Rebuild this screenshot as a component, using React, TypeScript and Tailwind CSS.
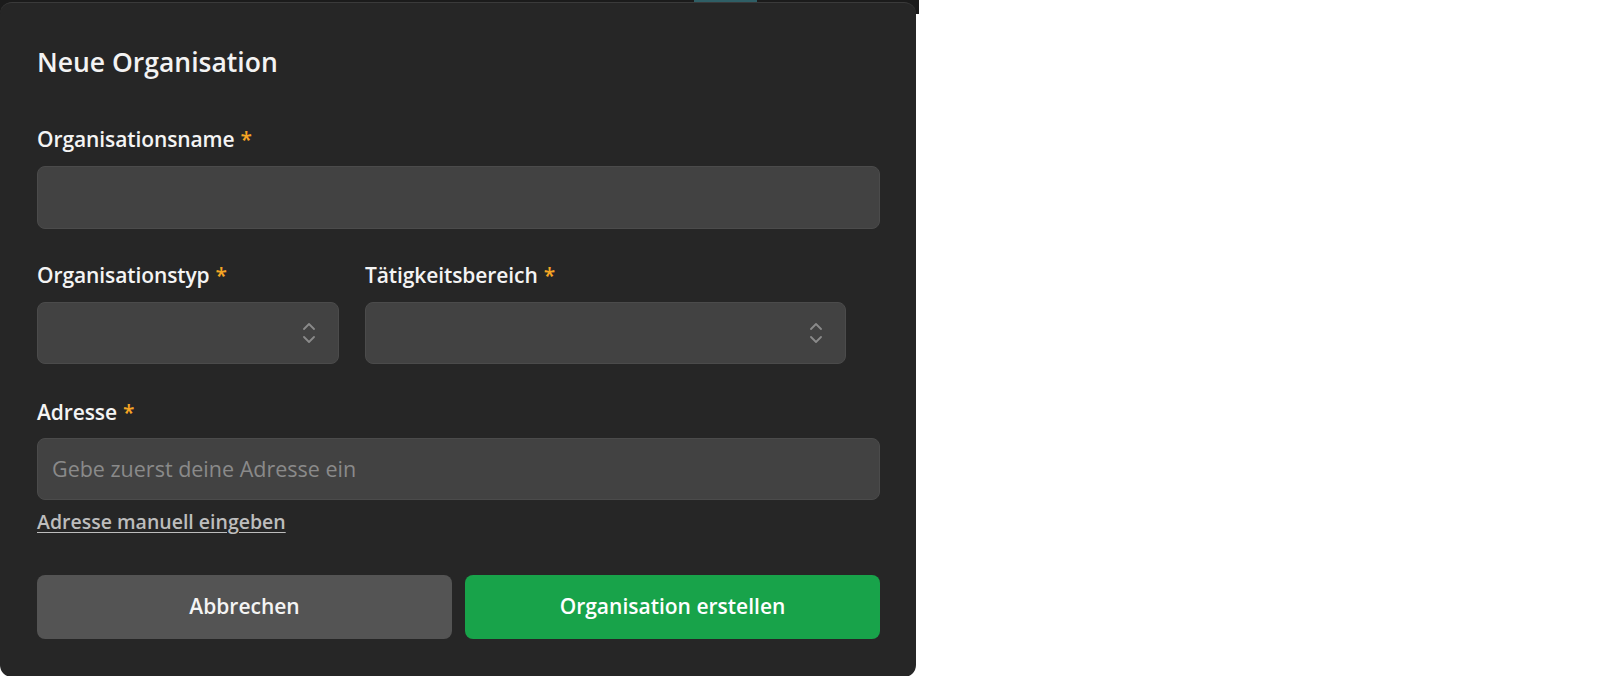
import React from 'react';

function Required() {
  return <span className="ml-1.5 text-[#f5a524]">*</span>;
}

function Label({ children }: { children: React.ReactNode }) {
  return (
    <label className="block text-[21px] leading-[26px] font-semibold text-[#f4f4f4] tracking-[-0.1px]">
      {children}
      <Required />
    </label>
  );
}

function UpDown() {
  return (
    <svg width="12" height="22" viewBox="0 0 12 22" fill="none" stroke="#8a8a8a" strokeWidth="1.8" strokeLinecap="round" strokeLinejoin="round">
      <path d="M1 7l5-5 5 5" />
      <path d="M1 15l5 5 5-5" />
    </svg>
  );
}

function Select({ className = '' }: { className?: string }) {
  return (
    <div className={`h-[62px] rounded-lg border border-[#4b4b4b] bg-[#424242] flex items-center justify-end pr-[23px] ${className}`}>
      <UpDown />
    </div>
  );
}

export default function App() {
  return (
    <div className="min-h-screen bg-white relative" style={{ fontFamily: '"Open Sans", "Noto Sans", sans-serif' }}>
      {/* backdrop strip behind the dialog */}
      <div className="absolute top-0 left-0 w-[919px] h-[14px] bg-[#1b1b1b]">
        <div className="absolute top-0 left-[694px] w-[63px] h-[2px] bg-[#2f5f66]" />
      </div>
      <div className="relative top-[2px] w-[916px] h-[675px] rounded-xl bg-[#262626] border-t border-[#3a3a3a] pl-[37px] pr-[36px] pt-[42px]">
        <h2 className="text-[26.5px] leading-[34px] font-semibold text-[#f3f3f3]">Neue Organisation</h2>

        <div className="mt-[47px]">
          <Label>Organisationsname</Label>
          <div className="mt-[14px] h-[63px] rounded-lg border border-[#4b4b4b] bg-[#424242]" />
        </div>

        <div className="mt-[33px] grid grid-cols-[302px_481px] gap-x-[26px]">
          <div>
            <Label>Organisationstyp</Label>
            <Select className="mt-[14px]" />
          </div>
          <div>
            <Label>Tätigkeitsbereich</Label>
            <Select className="mt-[14px]" />
          </div>
        </div>

        <div className="mt-[35px]">
          <Label>Adresse</Label>
          <div className="mt-[13px] h-[62px] rounded-lg border border-[#4b4b4b] bg-[#424242] flex items-center px-[14px]">
            <span className="text-[21.5px] text-[#8a8a8a]">Gebe zuerst deine Adresse ein</span>
          </div>
          <a className="mt-[10px] inline-block text-[19.5px] leading-6 font-semibold text-[#bdbdbd] underline underline-offset-[3px]">
            Adresse manuell eingeben
          </a>
        </div>

        <div className="mt-[40px] grid grid-cols-2 gap-[13px]">
          <button className="h-[64px] rounded-lg bg-[#545454] text-[21px] font-semibold text-[#f4f4f4]">Abbrechen</button>
          <button className="h-[64px] rounded-lg bg-[#18a34a] text-[21px] font-semibold text-white">Organisation erstellen</button>
        </div>
      </div>
    </div>
  );
}
